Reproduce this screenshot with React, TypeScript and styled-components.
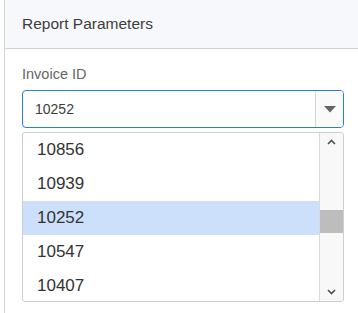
import React from 'react';
import styled, { createGlobalStyle } from 'styled-components';

const GlobalStyle = createGlobalStyle`
    html, body {
        margin: 0;
        padding: 0;
        background: #ffffff;
        font-family: 'Liberation Sans', Arial, sans-serif;
    }
`;

const invoices = ['10856', '10939', '10252', '10547', '10407'];
const selected = '10252';

export default function App() {
    return (
        <>
            <GlobalStyle />
            <Page>
                <Panel>
                    <Header>Report Parameters</Header>
                    <Body>
                        <Label>Invoice ID</Label>
                        <Select>
                            <Value>{selected}</Value>
                            <ToggleButton>
                                <svg width="12" height="7" viewBox="0 0 12 7">
                                    <path d="M0 0h12L6 6.5z" fill="#656565" />
                                </svg>
                            </ToggleButton>
                        </Select>
                        <ListBox>
                            <Items>
                                {invoices.map((id) => (
                                    <Item key={id} active={id === selected}>{id}</Item>
                                ))}
                            </Items>
                            <ScrollBar>
                                <ScrollArrow>
                                    <svg width="9" height="6" viewBox="0 0 9 6">
                                        <path d="M1 5l3.5-3.5L8 5" stroke="#505050" strokeWidth="1.6" fill="none" />
                                    </svg>
                                </ScrollArrow>
                                <Track>
                                    <Thumb />
                                </Track>
                                <ScrollArrow>
                                    <svg width="9" height="6" viewBox="0 0 9 6">
                                        <path d="M1 1l3.5 3.5L8 1" stroke="#505050" strokeWidth="1.6" fill="none" />
                                    </svg>
                                </ScrollArrow>
                            </ScrollBar>
                        </ListBox>
                    </Body>
                </Panel>
            </Page>
        </>
    );
}

const Page = styled.div`
    width: 358px;
    height: 313px;
    padding-left: 4px;
    box-sizing: border-box;
    overflow: hidden;
`;

const Panel = styled.div`
    border-left: 1px solid #d5d5d5;
    height: 100%;
`;

const Header = styled.div`
    height: 49px;
    box-sizing: border-box;
    padding: 15px 0 0 17px;
    background: #f6f8fb;
    border-bottom: 1px solid #d0d0d0;
    color: #3d3d3d;
    font-size: 15.5px;
`;

const Body = styled.div`
    padding: 17px 14px 0 17px;
    display: flex;
    flex-direction: column;
`;

const Label = styled.label`
    color: #666666;
    font-size: 14.5px;
    height: 24px;
`;

const Select = styled.div`
    display: flex;
    height: 38px;
    box-sizing: border-box;
    border: 1px solid #2a7be6;
    border-radius: 4px;
    background: #ffffff;
`;

const Value = styled.div`
    flex: 1;
    display: flex;
    align-items: center;
    padding-left: 12px;
    color: #3d3d3d;
    font-size: 14px;
`;

const ToggleButton = styled.div`
    width: 27px;
    border-left: 1px solid #d5d5d5;
    background: #fafafa;
    border-radius: 0 3px 3px 0;
    display: flex;
    align-items: center;
    justify-content: center;
`;

const ListBox = styled.div`
    margin-top: 4px;
    height: 170px;
    box-sizing: border-box;
    border: 1px solid #cfcfcf;
    border-radius: 3px;
    display: flex;
    overflow: hidden;
`;

const Items = styled.ul`
    flex: 1;
    list-style: none;
    margin: 0;
    padding: 0;
`;

const Item = styled.li<{ active?: boolean }>`
    height: 34px;
    display: flex;
    align-items: center;
    padding-left: 14px;
    font-size: 17px;
    color: #333333;
    background: ${(p) => (p.active ? '#cde0fb' : 'transparent')};
`;

const ScrollBar = styled.div`
    width: 23px;
    border-left: 1px solid #d9d9d9;
    background: #f8f8f8;
    display: flex;
    flex-direction: column;
`;

const ScrollArrow = styled.div`
    height: 18px;
    display: flex;
    align-items: center;
    justify-content: center;
`;

const Track = styled.div`
    flex: 1;
    padding-top: 59px;
`;

const Thumb = styled.div`
    height: 23px;
    background: #bdbdbd;
`;
